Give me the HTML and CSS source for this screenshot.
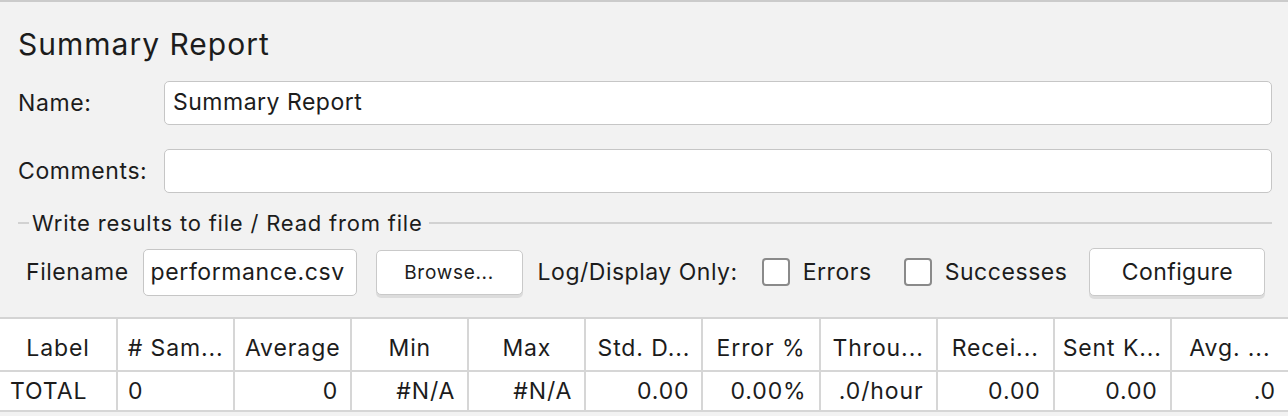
FILE: index.html
```html
<!DOCTYPE html>
<html>
<head>
<meta charset="utf-8">
<link rel="stylesheet" href="styles.css">
</head>
<body>
<div class="app">
  <div class="panel">
    <h1 class="title">Summary Report</h1>
    <div class="field-row">
      <label class="field-label">Name:</label>
      <div class="text-input">Summary Report</div>
    </div>
    <div class="field-row second">
      <label class="field-label">Comments:</label>
      <div class="text-input"></div>
    </div>
    <div class="group">
      <div class="group-head">
        <span class="group-tick"></span>
        <span class="group-title">Write results to file / Read from file</span>
        <span class="group-line"></span>
      </div>
      <div class="file-row">
        <span class="file-label">Filename</span>
        <div class="file-input">performance.csv</div>
        <button class="btn btn-browse">Browse...</button>
        <span class="log-label">Log/Display Only:</span>
        <span class="check check-errors"></span>
        <span class="check-label">Errors</span>
        <span class="check check-success"></span>
        <span class="check-label">Successes</span>
        <button class="btn btn-config">Configure</button>
      </div>
    </div>
  </div>
  <table class="results">
    <thead>
      <tr>
        <th>Label</th><th># Sam...</th><th>Average</th><th>Min</th><th>Max</th><th>Std. D...</th><th>Error %</th><th>Throu...</th><th>Recei...</th><th>Sent K...</th><th>Avg. ...</th>
      </tr>
    </thead>
    <tbody>
      <tr>
        <td class="left">TOTAL</td><td class="left">0</td><td>0</td><td>#N/A</td><td>#N/A</td><td>0.00</td><td>0.00%</td><td>.0/hour</td><td>0.00</td><td>0.00</td><td>.0</td>
      </tr>
    </tbody>
  </table>
</div>
</body>
</html>
```
FILE: styles.css
```css
* { box-sizing: border-box; }
html, body { margin: 0; padding: 0; }
body {
  background: #f2f2f2;
  font-family: Inter, "Open Sans", sans-serif;
  font-size: 23px;
  letter-spacing: 0.7px;
  color: #1c1c1c;
  width: 1288px;
  height: 416px;
  overflow: hidden;
}
.app {
  border-top: 2px solid #cbcbcb;
}
.panel {
  padding: 0 16px 0 18px;
  border-bottom: 2px solid #d4d4d4;
  height: 317px;
}
.title {
  margin: 0;
  font-weight: 400;
  font-size: 30px;
  letter-spacing: 1px;
  height: 79px;
  line-height: 84px;
}
.field-row {
  display: flex;
  align-items: center;
  height: 44px;
}
.field-row.second { margin-top: 24px; }
.field-label {
  width: 146px;
  white-space: nowrap;
  letter-spacing: 0.6px;
}
.text-input {
  flex: 1;
  height: 44px;
  background: #fff;
  border: 1.5px solid #c6c6c6;
  border-radius: 5px;
  line-height: 41px;
  padding-left: 8px;
  letter-spacing: 0.5px;
}
.group { margin-top: 18px; }
.group-head {
  display: flex;
  align-items: center;
  height: 24px;
}
.group-tick {
  width: 11px;
  border-top: 2px solid #d2d2d2;
  margin-right: 3px;
}
.group-title { font-size: 22px; letter-spacing: 0.8px; }
.group-line {
  flex: 1;
  border-top: 2px solid #d2d2d2;
  margin-left: 6px;
}
.file-row {
  display: flex;
  align-items: center;
  margin-top: 13px;
  height: 48px;
  padding-left: 8px;
  white-space: nowrap;
  letter-spacing: 0.55px;
}
.file-input {
  width: 214px;
  height: 47px;
  margin-left: 14px;
  background: #fff;
  border: 1.5px solid #c6c6c6;
  border-radius: 5px;
  line-height: 44px;
  padding-left: 7px;
  letter-spacing: 0.6px;
}
.btn {
  background: #fff;
  border: 1.5px solid #c9c9c9;
  border-radius: 5px;
  box-shadow: 0 3px 0 #dcdcdc;
  font-family: Inter, "Open Sans", sans-serif;
  color: #1c1c1c;
  padding: 0;
}
.btn-browse {
  width: 147px;
  height: 45px;
  margin-left: 19px;
  font-size: 19px;
  letter-spacing: 0.7px;
}
.log-label { margin-left: 15px; letter-spacing: 0.5px; }
.check {
  width: 28px;
  height: 28px;
  background: #fff;
  border: 2px solid #8a8a8a;
  border-radius: 4px;
  flex: none;
}
.check-errors { margin-left: 24px; }
.check-success { margin-left: 32px; }
.check-label { margin-left: 13px; }
.btn-config {
  width: 176px;
  height: 48px;
  margin-left: 22px;
  font-size: 23px;
  letter-spacing: 0.4px;
}
.results {
  width: 1288px;
  table-layout: fixed;
  border-collapse: collapse;
  background: #fff;
  letter-spacing: 0.9px;
}
.results th, .results td {
  border: 2px solid #d6d6d6;
  border-top: none;
  font-weight: 400;
  white-space: nowrap;
  overflow: hidden;
}
.results tr > :first-child { border-left: none; }
.results tr > :last-child { border-right: none; }
.results th {
  height: 52px;
  text-align: center;
  padding: 6px 2px 0;
}
.results td {
  height: 40px;
  text-align: right;
  padding: 0 12px 0 10px;
}
.results td.left { text-align: left; }
```
